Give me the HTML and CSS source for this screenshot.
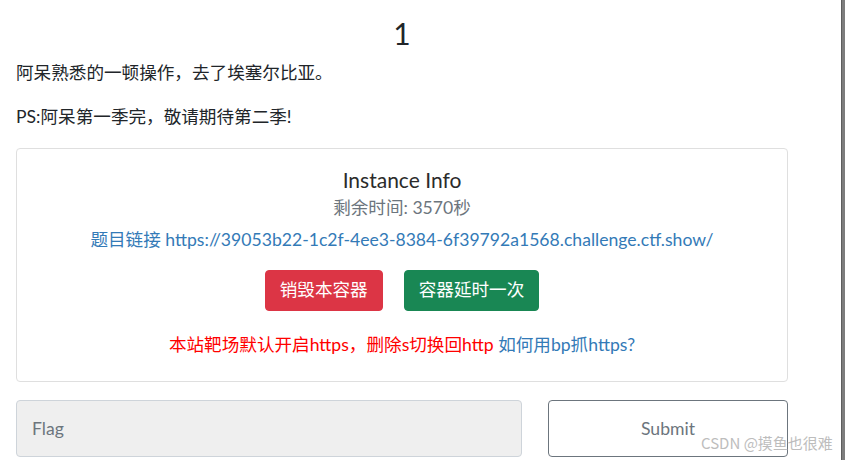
FILE: index.html
```html
<!DOCTYPE html>
<html lang="zh">
<head>
<meta charset="utf-8">
<title>1</title>
<link rel="stylesheet" href="styles.css">
</head>
<body>
<div class="page">
  <main class="main">
    <h1 class="title">1</h1>
    <p class="desc">阿呆熟悉的一顿操作，去了埃塞尔比亚。</p>
    <p class="desc">PS:阿呆第一季完，敬请期待第二季!</p>

    <section class="card">
      <h4 class="card-title">Instance Info</h4>
      <div class="time">剩余时间: 3570秒</div>
      <div class="link-line"><a class="link" href="#">题目链接 https://39053b22-1c2f-4ee3-8384-6f39792a1568.challenge.ctf.show/</a></div>
      <div class="actions">
        <button class="btn btn-danger">销毁本容器</button>
        <button class="btn btn-success">容器延时一次</button>
      </div>
      <p class="notice"><span class="red">本站靶场默认开启https，删除s切换回http</span> <a class="link" href="#">如何用bp抓https?</a></p>
    </section>

    <form class="flag-row">
      <input class="flag-input" type="text" placeholder="Flag">
      <button class="submit" type="button">Submit</button>
    </form>
  </main>
  <div class="scrollbar"></div>
</div>
<div class="watermark">CSDN @摸鱼也很难</div>
</body>
</html>
```

FILE: styles.css
```css
* { box-sizing: border-box; }
html, body {
  margin: 0;
  padding: 0;
  background: #ffffff;
}
body {
  font-family: Lato, "Noto Sans CJK SC", sans-serif;
  font-size: 17.6px;
  line-height: 1.5;
  color: #212529;
  height: 460px;
  overflow: hidden;
}
.page {
  display: flex;
  height: 460px;
}
.main {
  width: 772px;
  margin-left: 16px;
  flex: none;
}
.scrollbar {
  margin-left: auto;
  width: 4px;
  height: 100%;
  background: #7d7d7d;
  border-left: 1px solid #5e5e5e;
}
.title {
  margin: 0 0 8px;
  padding-top: 15px;
  font-size: 30px;
  font-weight: 400;
  line-height: 36px;
  text-align: center;
  color: #212529;
}
.desc {
  margin: 0 0 17px;
  line-height: 27px;
}
.card {
  border: 1px solid #dfdfdf;
  border-radius: 4px;
  padding: 18px 18px 0;
  height: 234px;
  text-align: center;
  margin-top: 18px;
}
.card-title {
  margin: 0;
  font-size: 21px;
  font-weight: 400;
  line-height: 26px;
  color: #2b2b2b;
}
.time {
  margin-top: 2px;
  color: #6c757d;
  line-height: 26px;
}
.link-line {
  margin-top: 5px;
  line-height: 27px;
}
.link {
  color: #337ab7;
  text-decoration: none;
}
.actions {
  margin-top: 17px;
  display: flex;
  justify-content: center;
  gap: 21px;
}
.btn {
  font-family: Lato, "Noto Sans CJK SC", sans-serif;
  font-size: 17.6px;
  color: #fff;
  border: 1px solid transparent;
  border-radius: 4px;
  height: 41px;
  padding: 0 14px;
  line-height: 1.5;
}
.btn-danger { background: #dc3545; border-color: #dc3545; }
.btn-success { background: #198754; border-color: #198754; }
.notice {
  margin: 20px 0 0;
  line-height: 27px;
}
.red { color: #ff0000; }
.flag-row {
  margin-top: 18px;
  display: flex;
  gap: 26px;
}
.flag-input {
  width: 506px;
  height: 57px;
  background: #efefef;
  border: 1px solid #ced4da;
  border-radius: 4px;
  padding: 0 15px;
  font-family: Lato, "Noto Sans CJK SC", sans-serif;
  font-size: 17.6px;
  color: #495057;
}
.flag-input::placeholder { color: #6c757d; opacity: 1; }
.submit {
  width: 240px;
  height: 57px;
  background: #fff;
  border: 1px solid #6c757d;
  border-radius: 4px;
  color: #6c757d;
  font-family: Lato, "Noto Sans CJK SC", sans-serif;
  font-size: 17.6px;
}
.watermark {
  position: absolute;
  left: 701px;
  top: 433px;
  font-family: "Noto Sans CJK SC", sans-serif;
  font-size: 15px;
  line-height: 20px;
  color: #bdbdbd;
  text-shadow: 0 0 1px #fff;
  white-space: nowrap;
}
```
